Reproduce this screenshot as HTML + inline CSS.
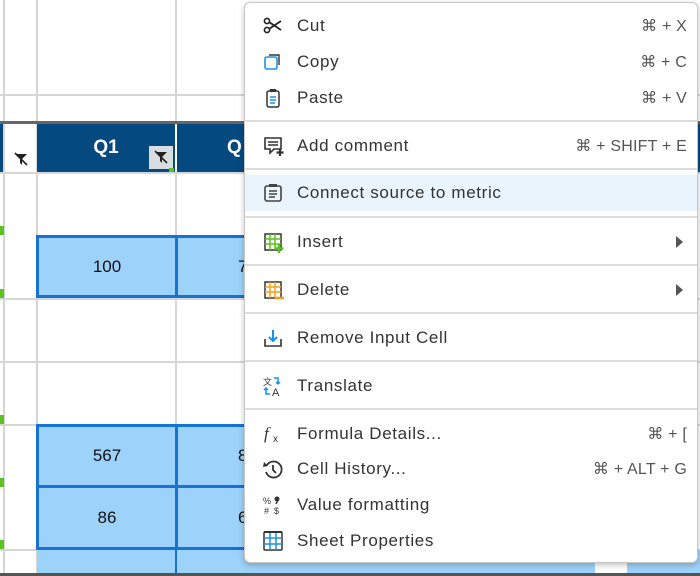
<!DOCTYPE html>
<html><head><meta charset="utf-8"><style>
*{margin:0;padding:0;box-sizing:border-box}
body{width:700px;height:576px;overflow:hidden;background:#fff;position:relative;font-family:"Liberation Sans",sans-serif}
.a{position:absolute}
.vl{position:absolute;width:2px;background:#d6d6d6;top:0;height:576px}
.hl{position:absolute;height:2px;background:#d6d6d6;left:0;width:700px}
.sel{position:absolute;background:#9dd2fb;border:3px solid #1673d1;font-size:17px;color:#111;display:flex;align-items:center;justify-content:center}
.menu{position:absolute;left:244px;top:2px;width:454px;height:561px;background:#fff;border:1px solid #c8c8c8;border-radius:6px;box-shadow:0 2px 6px rgba(0,0,0,.25)}
.it{position:absolute;left:0;width:452px;height:36px;display:flex;align-items:center;font-size:17px;color:#333;letter-spacing:.65px}
.it .t{position:absolute;left:52px}
.it .k{position:absolute;right:10px;color:#555;font-size:16px;letter-spacing:.2px}
.it svg{position:absolute;left:18px;top:8px}
.sep{position:absolute;left:0;width:452px;height:2px;background:#ddd}
.arr{position:absolute;right:14px;width:0;height:0;border-left:7px solid #555;border-top:6px solid transparent;border-bottom:6px solid transparent}
</style></head><body>
<div class="vl" style="left:3px"></div>
<div class="vl" style="left:36px"></div>
<div class="vl" style="left:175px"></div>
<div class="hl" style="top:94px"></div>
<div class="a" style="left:0;top:121px;width:700px;height:3px;background:#666"></div>
<div class="a" style="left:0;top:124px;width:3px;height:48px;background:#044a80"></div>
<div class="a" style="left:37px;top:124px;width:663px;height:48px;background:#044a80"></div>
<div class="a" style="left:175px;top:124px;width:2px;height:48px;background:#fff"></div>
<div class="a" style="left:37px;top:124px;width:138px;height:48px;color:#fff;font-weight:bold;font-size:19px;text-align:center;line-height:48px">Q1</div>
<div class="a" style="left:227px;top:124px;color:#fff;font-weight:bold;font-size:19px;line-height:48px">Q</div>
<div class="a" style="left:149px;top:146px;width:24px;height:23px;background:#d8dde2"></div>
<svg class="a" style="left:152px;top:148px" width="18" height="18"><path d="M3 4h12l-5 5v6l-2-2V9z" fill="#222"/><path d="M3 3l12 12" stroke="#222" stroke-width="1.6"/></svg>
<svg class="a" style="left:12px;top:150px" width="18" height="18"><path d="M3 4h12l-5 5v6l-2-2V9z" fill="#222"/><path d="M3 3l12 12" stroke="#222" stroke-width="1.6"/></svg>
<div class="a" style="left:169px;top:168px;width:5px;height:4px;background:#5bc21e"></div>
<div class="hl" style="top:172px"></div>
<div class="hl" style="top:298px"></div>
<div class="hl" style="top:361px"></div>
<div class="hl" style="top:424px"></div>
<div class="hl" style="top:549px"></div>
<div class="sel" style="left:36px;top:235px;width:142px;height:63px">100</div>
<div class="sel" style="left:175px;top:235px;width:80px;height:63px;justify-content:flex-start;padding-left:60px">7</div>
<div class="sel" style="left:36px;top:424px;width:142px;height:64px">567</div>
<div class="sel" style="left:175px;top:424px;width:80px;height:64px;justify-content:flex-start;padding-left:60px">8</div>
<div class="sel" style="left:36px;top:485px;width:142px;height:65px">86</div>
<div class="sel" style="left:175px;top:485px;width:80px;height:65px;justify-content:flex-start;padding-left:60px">6</div>
<div class="a" style="left:37px;top:550px;width:663px;height:23px;background:#9dd2fb"></div>
<div class="a" style="left:175px;top:550px;width:2px;height:23px;background:#1673d1"></div>
<div class="a" style="left:595px;top:563px;width:32px;height:10px;background:#fff"></div>
<div class="a" style="left:0;top:573px;width:700px;height:3px;background:#555"></div>
<div class="a" style="left:0;top:226px;width:4px;height:9px;background:#5bc21e"></div>
<div class="a" style="left:0;top:289px;width:4px;height:9px;background:#5bc21e"></div>
<div class="a" style="left:0;top:415px;width:4px;height:9px;background:#5bc21e"></div>
<div class="a" style="left:0;top:478px;width:4px;height:9px;background:#5bc21e"></div>
<div class="a" style="left:0;top:540px;width:4px;height:9px;background:#5bc21e"></div>
<div class="menu">
<div class="it" style="top:5px"><svg width="20" height="20"><circle cx="4" cy="5" r="2.6" fill="none" stroke="#222" stroke-width="1.6"/><circle cx="4" cy="14" r="2.6" fill="none" stroke="#222" stroke-width="1.6"/><path d="M6 6l12 8M6 13l12-8" stroke="#222" stroke-width="1.8"/></svg><span class="t">Cut</span><span class="k">⌘ + X</span></div>
<div class="it" style="top:41px"><svg width="20" height="20"><rect x="2" y="5" width="12" height="12" rx="2" fill="none" stroke="#1e8fe8" stroke-width="1.6"/><path d="M6 3h10v10" fill="none" stroke="#333" stroke-width="1.4"/></svg><span class="t">Copy</span><span class="k">⌘ + C</span></div>
<div class="it" style="top:77px"><svg width="20" height="20"><rect x="4" y="3" width="12" height="16" rx="2" fill="none" stroke="#333" stroke-width="1.5"/><rect x="7" y="1" width="6" height="3" fill="#333"/><path d="M7 9h6M7 12h6M7 15h5" stroke="#1e8fe8" stroke-width="1.5"/></svg><span class="t">Paste</span><span class="k">⌘ + V</span></div>
<div class="sep" style="top:117px"></div>
<div class="it" style="top:125px"><svg width="22" height="22"><path d="M2 2h16v11h-7l-4 4v-4H2z" fill="none" stroke="#333" stroke-width="1.6"/><path d="M5 6h10M5 9h10" stroke="#333" stroke-width="1.4"/><path d="M17 13v7M13.5 16.5h7" stroke="#333" stroke-width="2.2"/></svg><span class="t">Add comment</span><span class="k">⌘ + SHIFT + E</span></div>
<div class="sep" style="top:165px"></div>
<div class="a" style="left:0;top:172px;width:452px;height:36px;background:#e9f4fd"></div>
<div class="it" style="top:172px"><svg width="20" height="20"><rect x="2" y="3" width="16" height="15" rx="2" fill="none" stroke="#444" stroke-width="1.6"/><rect x="6" y="1" width="8" height="3" fill="#444"/><path d="M6 8h8M6 11h8M6 14h6" stroke="#444" stroke-width="1.4"/></svg><span class="t">Connect source to metric</span></div>
<div class="sep" style="top:213px"></div>
<div class="it" style="top:221px"><svg width="22" height="22"><rect x="2" y="2" width="16" height="16" fill="none" stroke="#333" stroke-width="1.5"/><path d="M7 2v16M12 2v16M2 7h16M2 12h16" stroke="#5bc21e" stroke-width="1.5"/><path d="M16 12v9M11.5 16.5h9" stroke="#5bc21e" stroke-width="2.6"/></svg><span class="t">Insert</span><span class="arr"></span></div>
<div class="sep" style="top:261px"></div>
<div class="it" style="top:269px"><svg width="22" height="22"><rect x="2" y="2" width="16" height="16" fill="none" stroke="#333" stroke-width="1.5"/><path d="M7 2v16M12 2v16M2 7h16M2 12h16" stroke="#f5a01a" stroke-width="1.5"/><path d="M12 18h9" stroke="#f5a01a" stroke-width="2.6"/></svg><span class="t">Delete</span><span class="arr"></span></div>
<div class="sep" style="top:309px"></div>
<div class="it" style="top:317px"><svg width="22" height="22"><path d="M2 11v7h16v-7" fill="none" stroke="#333" stroke-width="1.6"/><path d="M10 2v10" stroke="#1e8fe8" stroke-width="2"/><path d="M6 9l4 4 4-4" fill="none" stroke="#1e8fe8" stroke-width="2"/></svg><span class="t">Remove Input Cell</span></div>
<div class="sep" style="top:357px"></div>
<div class="it" style="top:365px"><svg width="22" height="22"><text x="0" y="9" font-size="9" fill="#333" font-family="Noto Sans CJK SC,sans-serif">文</text><text x="9" y="20" font-size="11" fill="#333" font-family="Liberation Sans,sans-serif">A</text><path d="M11 2h4v6M13 6l2 2 2-2M7 18H3v-6M1 14l2-2 2 2" fill="none" stroke="#1e8fe8" stroke-width="1.5"/></svg><span class="t">Translate</span></div>
<div class="sep" style="top:405px"></div>
<div class="it" style="top:413px"><svg width="22" height="22"><text x="1" y="15" font-size="17" font-style="italic" fill="#333" font-family="Liberation Serif,serif">f</text><text x="10" y="18" font-size="10" fill="#333" font-family="Liberation Sans,sans-serif">x</text></svg><span class="t">Formula Details...</span><span class="k">⌘ + [</span></div>
<div class="it" style="top:448px"><svg width="22" height="22"><path d="M4 6A8 8 0 1 1 3 13" fill="none" stroke="#333" stroke-width="1.8"/><path d="M1 3l4 4-5 1z" fill="#333"/><path d="M10 6v5l3 3" fill="none" stroke="#333" stroke-width="1.8"/></svg><span class="t">Cell History...</span><span class="k">⌘ + ALT + G</span></div>
<div class="it" style="top:484px"><svg width="22" height="22"><text x="0" y="9" font-size="9" fill="#333">%</text><text x="1" y="19" font-size="9" fill="#333">#</text><text x="11" y="19" font-size="9" fill="#333">$</text><circle cx="14" cy="4" r="2.5" fill="#333"/><path d="M15 5l-2 4" stroke="#333" stroke-width="1.5"/></svg><span class="t">Value formatting</span></div>
<div class="it" style="top:520px"><svg width="22" height="22"><rect x="1" y="1" width="18" height="18" rx="1" fill="none" stroke="#333" stroke-width="1.5"/><path d="M7 1v18M13 1v18M1 7h18M1 13h18" stroke="#1e8fe8" stroke-width="1.5"/><path d="M1 1h18" stroke="#333" stroke-width="2"/></svg><span class="t">Sheet Properties</span></div>
</div>
</body></html>
